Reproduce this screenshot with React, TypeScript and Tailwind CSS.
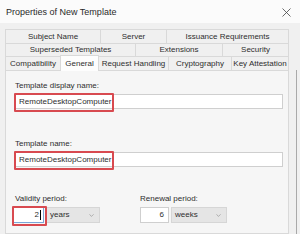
import type { ReactNode } from "react";

const font = "font-['Liberation_Sans','Arial',sans-serif]";

interface TabProps {
  width: string;
  children: ReactNode;
  last?: boolean;
}

function Tab({ width, children, last }: TabProps) {
  return (
    <div
      className={`${width} flex h-full items-center justify-center border-t border-l border-[#d9d9d9] bg-[#f0f0f0] whitespace-nowrap ${
        last ? "border-r" : ""
      }`}
    >
      {children}
    </div>
  );
}

function Dropdown({ label, width }: { label: string; width: string }) {
  return (
    <div
      className={`${width} flex h-[16px] items-center justify-between border border-[#d6d6d6] bg-[#e5e5e5] pl-[3px] pr-[5px]`}
    >
      <span>{label}</span>
      <svg viewBox="0 0 8 5" className="h-[3px] w-[5px]">
        <polyline points="0.5 0.5 4 4 7.5 0.5" fill="none" stroke="#8a8a8a" strokeWidth={1} />
      </svg>
    </div>
  );
}

export default function App() {
  return (
    <div
      className={`${font} flex h-[234px] w-[300px] flex-col overflow-hidden bg-[#f0f0f0] text-[8px] leading-[10px] text-[#2e2e2e]`}
    >
      {/* title bar */}
      <div className="flex h-[23px] shrink-0 items-center justify-between bg-[#fbfbfb] pt-px pl-[6px] pr-[9px]">
        <span className="text-[9px] text-[#2a2a2a]">Properties of New Template</span>
        <svg viewBox="0 0 9 9" className="h-[9px] w-[9px]">
          <line x1="0.5" y1="0.5" x2="8.5" y2="8.5" stroke="#444" strokeWidth={0.8} />
          <line x1="8.5" y1="0.5" x2="0.5" y2="8.5" stroke="#444" strokeWidth={0.8} />
        </svg>
      </div>

      <div className="flex min-h-0 flex-1">
        <div className="flex w-[289px] flex-col pt-[6px] pl-[5px]">
          {/* tab rows */}
          <div className="flex h-[14px]">
            <Tab width="w-[95px]">Subject Name</Tab>
            <Tab width="w-[66px]">Server</Tab>
            <Tab width="w-[123px]" last>
              Issuance Requirements
            </Tab>
          </div>
          <div className="flex h-[13px]">
            <Tab width="w-[130px]">Superseded Templates</Tab>
            <Tab width="w-[87px]">Extensions</Tab>
            <Tab width="w-[67px]" last>
              Security
            </Tab>
          </div>
          <div className="relative z-10 flex h-[14px] items-end">
            <Tab width="w-[55px]">Compatibility</Tab>
            <div className="-mb-px flex h-[16px] w-[39px] items-center justify-center border-x border-t border-[#d9d9d9] bg-[#fdfdfd]">
              General
            </div>
            <div className="flex h-full">
              <div className="flex w-[69px] items-center justify-center border-t border-[#d9d9d9] bg-[#f0f0f0]">
                Request Handling
              </div>
              <Tab width="w-[63px]">Cryptography</Tab>
              <Tab width="w-[58px]" last>
                Key Attestation
              </Tab>
            </div>
          </div>

          {/* panel */}
          <div className="flex-1 border border-[#d9d9d9] bg-[#f6f6f6] pt-[10px] pl-[9px]">
            <div>Template display name:</div>
            <div className="relative mt-[3px] flex h-[15px] w-[268px] items-center border border-[#cfcfcf] bg-white pl-[3px]">
              RemoteDesktopComputer
              <div className="absolute -top-[2px] -left-[2px] h-[19px] w-[100px] rounded-[1px] border-2 border-[#d84a50]" />
            </div>

            <div className="mt-[30px]">Template name:</div>
            <div className="relative mt-[3px] flex h-[15px] w-[268px] items-center border border-[#cfcfcf] bg-white pl-[3px]">
              RemoteDesktopComputer
              <div className="absolute -top-[2px] -left-[2px] h-[19px] w-[100px] rounded-[1px] border-2 border-[#d84a50]" />
            </div>

            <div className="mt-[27px] flex">
              <div className="w-[125px]">
                <div>Validity period:</div>
                <div className="mt-[3px] flex items-center gap-[2px]">
                  <div className="relative ml-[-2px] flex h-[16px] w-[31px] items-center justify-end border border-[#7aa7d8] bg-white pr-[2px]">
                    <span>2</span>
                    <span className="ml-px h-[10px] w-px bg-black" />
                    <div className="absolute -top-[2px] -left-[2px] h-[20px] w-[35px] rounded-[1px] border-2 border-[#d84a50]" />
                  </div>
                  <Dropdown label="years" width="w-[54px]" />
                </div>
              </div>
              <div>
                <div>Renewal period:</div>
                <div className="mt-[3px] flex items-center gap-[2px]">
                  <div className="flex h-[16px] w-[29px] items-center justify-end border border-[#cfcfcf] bg-white pr-[4px]">
                    6
                  </div>
                  <Dropdown label="weeks" width="w-[56px]" />
                </div>
              </div>
            </div>
          </div>
        </div>
        <div className="w-[7px]" />
        <div className="mt-[47px] w-px bg-[#a9a9a9]" />
      </div>
    </div>
  );
}
